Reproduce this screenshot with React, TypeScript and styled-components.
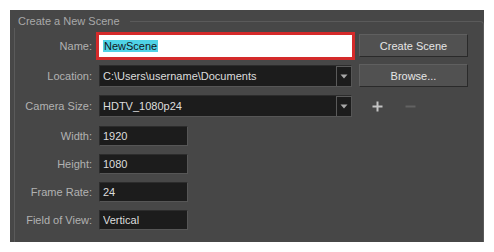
import React from 'react';
import styled, { createGlobalStyle } from 'styled-components';

const Global = createGlobalStyle`
	html, body {
		margin: 0;
		background: #ffffff;
	}
	body {
		font-family: 'Liberation Sans', Arial, sans-serif;
		font-size: 11px;
	}
`;

const Page = styled.div`
	padding: 10px;
`;

const Panel = styled.div`
	width: 474px;
	height: 232px;
	background: #474747;
	overflow: hidden;
	padding: 4px 0 0 4px;
	box-sizing: border-box;
`;

const Group = styled.div`
	display: flex;
	flex-direction: column;
	width: 470px;
`;

const Header = styled.div`
	display: flex;
	height: 14px;
`;

const Title = styled.span`
	font-size: 11px;
	line-height: 14px;
	color: #a9a9a9;
	padding: 0 10px 0 4px;
`;

const HeaderLine = styled.div`
	flex: 1;
	margin-top: 7px;
	border-top: 1px solid #5a5a5a;
	border-right: 1px solid #5a5a5a;
	border-top-right-radius: 4px;
`;

const Body = styled.div`
	border-left: 1px solid #5a5a5a;
	border-right: 1px solid #5a5a5a;
	display: grid;
	grid-template-columns: 77px 253px 109px;
	column-gap: 7px;
	row-gap: 8px;
	padding: 7px 0 40px 0;
	align-items: start;
`;

/* small rows sit 1px lower than the flow gives them */
const Label = styled.label<{ $small?: boolean }>`
	grid-column: 1;
	justify-self: end;
	font-size: 11px;
	color: #b2b2b2;
	line-height: ${(p) => (p.$small ? 20 : 22)}px;
	margin: ${(p) => (p.$small ? '1px 0 -1px' : '0')};
	white-space: nowrap;
`;

const Field = styled.div<{ $small?: boolean; $light?: boolean }>`
	grid-column: 2;
	display: flex;
	align-items: center;
	box-sizing: border-box;
	width: ${(p) => (p.$small ? '89px' : '100%')};
	height: ${(p) => (p.$small ? 20 : 22)}px;
	margin: ${(p) => (p.$small ? '1px 0 -1px' : '0')};
	background: ${(p) => (p.$light ? '#ffffff' : '#1c1c1c')};
	border: 1px solid;
	border-color: ${(p) => (p.$light ? '#ffffff' : '#2c2c2c #565656 #565656 #2c2c2c')};
	outline: ${(p) => (p.$light ? '3px solid #d42a2a' : 'none')};
	font-size: 11px;
	color: #dcdcdc;
	padding-left: 3px;
	white-space: nowrap;
	overflow: hidden;
`;

const Value = styled.span`
	flex: 1;
	overflow: hidden;
`;

const Selected = styled.span`
	background: #4fd3e6;
	color: #14161a;
	padding: 1px 1px 2px 1px;
`;

const Arrow = styled.div`
	width: 15px;
	height: 20px;
	box-sizing: border-box;
	border-left: 1px solid #5a5a5a;
	border-top: 1px solid #5a5a5a;
	margin-top: -1px;
	display: flex;
	align-items: center;
	justify-content: center;
	background: #1c1c1c;
`;

const Button = styled.button`
	grid-column: 3;
	height: 23px;
	box-sizing: border-box;
	background: #515151;
	border: 1px solid;
	border-color: #5f5f5f #2a2a2a #2a2a2a #5f5f5f;
	color: #e6e6e6;
	font-family: inherit;
	font-size: 11px;
	padding: 0;
	margin-top: -1px;
`;

const Tools = styled.div`
	grid-column: 3;
	display: flex;
	align-items: center;
	height: 22px;
	gap: 22px;
	padding-left: 13px;
`;

const Caret = () => (
	<svg width='8' height='5' viewBox='0 0 8 5'>
		<path d='M0.5 0.5 H7.5 L4 4.5 Z' fill='#a8a8a8' />
	</svg>
);

const Plus = () => (
	<svg width='11' height='11' viewBox='0 0 11 11'>
		<path d='M5.5 0.5 V10.5 M0.5 5.5 H10.5' stroke='#c4c4c4' strokeWidth='2' />
	</svg>
);

const Minus = () => (
	<svg width='11' height='11' viewBox='0 0 11 11'>
		<path d='M0.5 5.5 H10.5' stroke='#626262' strokeWidth='2' />
	</svg>
);

const small = [
	{ label: 'Width:', value: '1920' },
	{ label: 'Height:', value: '1080' },
	{ label: 'Frame Rate:', value: '24' },
	{ label: 'Field of View:', value: 'Vertical' },
];

export default function App() {
	return (
		<>
			<Global />
			<Page>
				<Panel>
					<Group>
						<Header>
							<Title>Create a New Scene</Title>
							<HeaderLine />
						</Header>
						<Body>
							<Label>Name:</Label>
							<Field $light>
								<Value>
									<Selected>NewScene</Selected>
								</Value>
							</Field>
							<Button>Create Scene</Button>

							<Label>Location:</Label>
							<Field>
								<Value>C:\Users\username\Documents</Value>
								<Arrow>
									<Caret />
								</Arrow>
							</Field>
							<Button>Browse...</Button>

							<Label>Camera Size:</Label>
							<Field>
								<Value>HDTV_1080p24</Value>
								<Arrow>
									<Caret />
								</Arrow>
							</Field>
							<Tools>
								<Plus />
								<Minus />
							</Tools>

							{small.map((r) => (
								<React.Fragment key={r.label}>
									<Label $small>{r.label}</Label>
									<Field $small>
										<Value>{r.value}</Value>
									</Field>
								</React.Fragment>
							))}
						</Body>
					</Group>
				</Panel>
			</Page>
		</>
	);
}
